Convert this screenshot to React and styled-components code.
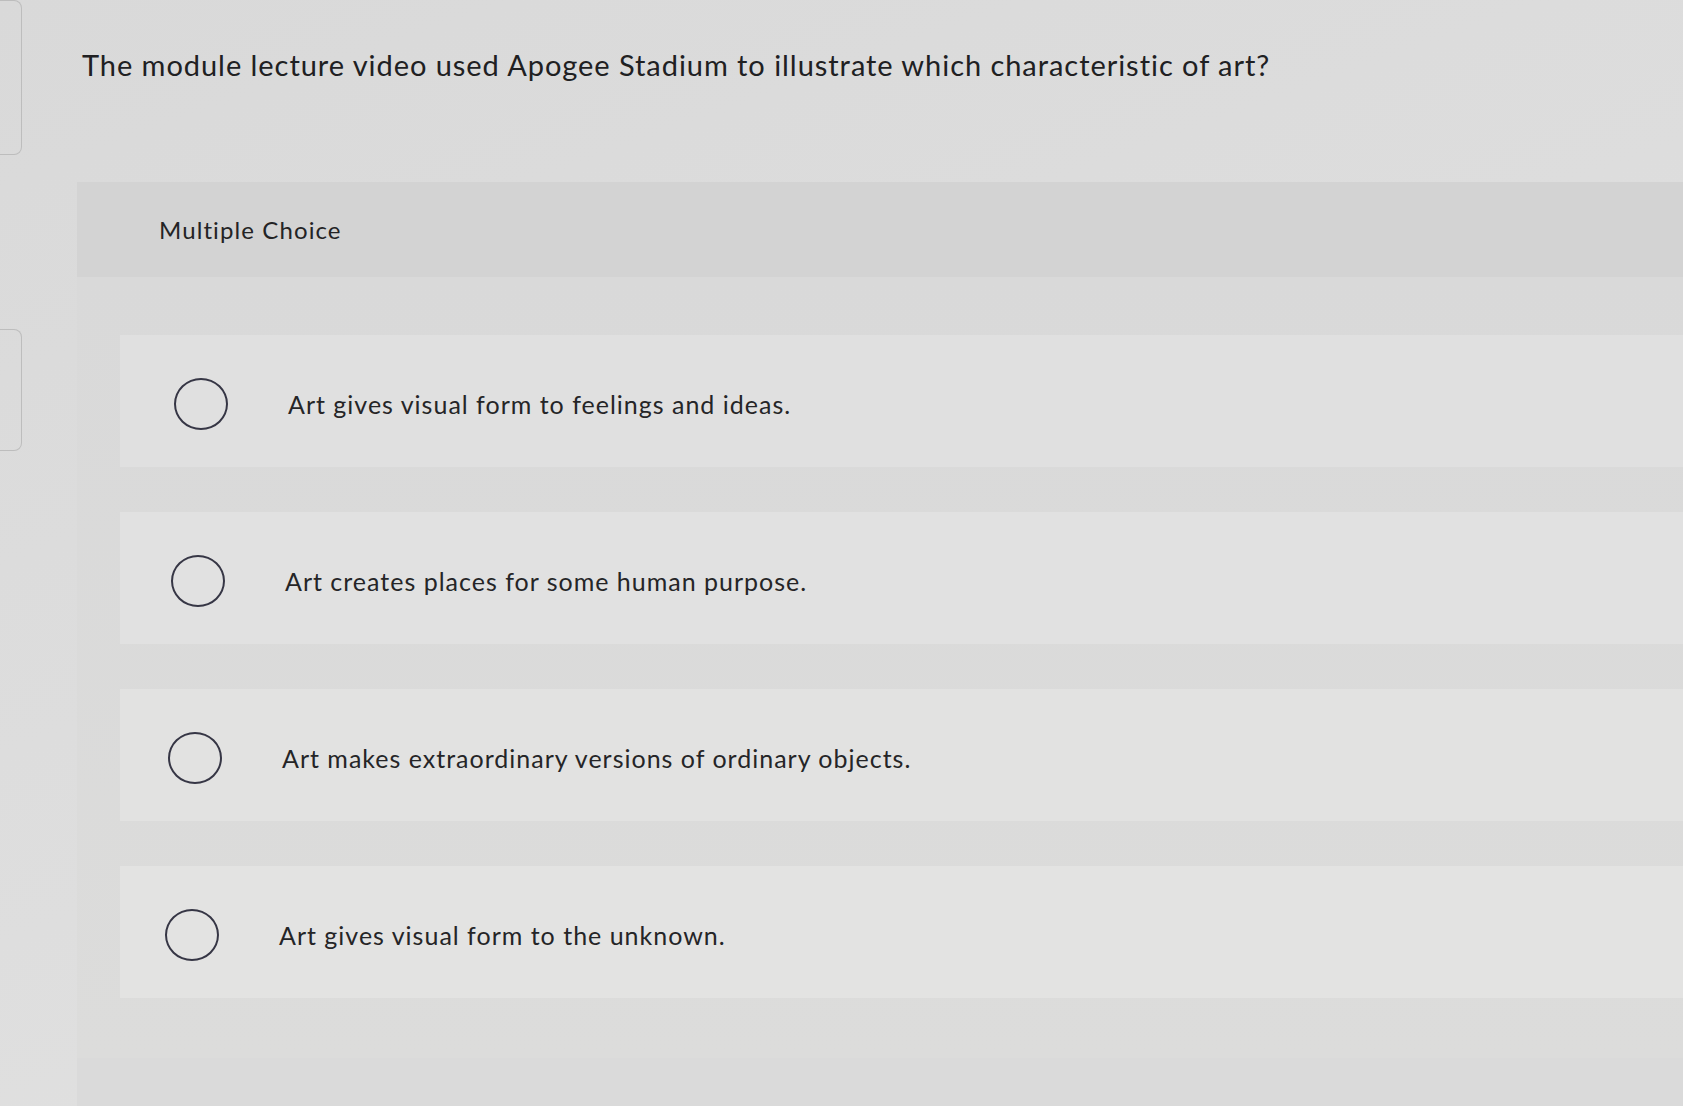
import React from 'react';
import styled, { createGlobalStyle } from 'styled-components';

const GlobalStyle = createGlobalStyle`
	html, body {
		margin: 0;
		padding: 0;
	}
	body {
		font-family: Lato, "Open Sans", "Liberation Sans", sans-serif;
		background: #dbdbdb;
	}
`;

const Page = styled.div`
	display: flex;
	min-height: 100vh;
	background: linear-gradient(160deg, #d9d9d9 0%, #dedede 55%, #e3e3e2 100%);
	overflow: hidden;
`;

const Rail = styled.div`
	width: 22px;
	flex-shrink: 0;
	display: flex;
	flex-direction: column;
`;

const RailTab = styled.div`
	height: ${props => props.h}px;
	margin-top: ${props => props.top || 0}px;
	border: 1.5px solid #bdbdbd;
	border-left: none;
	border-radius: 0 8px 8px 0;
`;

const Main = styled.main`
	flex: 1;
	padding-left: 55px;
	display: flex;
	flex-direction: column;
`;

const Question = styled.h1`
	margin: 47px 0 0 5px;
	font-size: 29px;
	font-weight: 400;
	line-height: 36px;
	color: #202022;
	letter-spacing: 0.95px;
	white-space: nowrap;
`;

const Panel = styled.section`
	margin-top: 99px;
	flex: 1;
	background: #dadada;
	display: flex;
	flex-direction: column;
`;

const PanelHeader = styled.div`
	height: 95px;
	display: flex;
	align-items: center;
	padding-left: 82px;
	background: #d3d3d3;
	font-size: 24px;
	letter-spacing: 1.1px;
	color: #232325;
`;

const OptionList = styled.div`
	display: flex;
	flex-direction: column;
	gap: 45px;
	padding: 58px 0 60px 43px;
	background: linear-gradient(180deg, #d9d9d9 0%, #dcdcdb 100%);
`;

const Option = styled.label`
	height: 132px;
	box-sizing: border-box;
	padding: 6px 0 0 ${props => props.indent}px;
	display: flex;
	align-items: center;
	background: ${props => props.shade};
	cursor: pointer;
`;

const Radio = styled.span`
	width: 50px;
	height: 48px;
	flex-shrink: 0;
	border: 2px solid #363645;
	border-radius: 50%;
`;

const OptionText = styled.span`
	margin-left: 60px;
	font-size: 25px;
	color: #252527;
	letter-spacing: 1px;
	white-space: nowrap;
`;

const options = [
	{ text: 'Art gives visual form to feelings and ideas.', indent: 54, shade: '#e0e0e0' },
	{ text: 'Art creates places for some human purpose.', indent: 51, shade: '#e1e1e1' },
	{ text: 'Art makes extraordinary versions of ordinary objects.', indent: 48, shade: '#e2e2e1' },
	{ text: 'Art gives visual form to the unknown.', indent: 45, shade: '#e3e3e2' }
];

export default function App() {
	return (
		<>
			<GlobalStyle />
			<Page>
				<Rail>
					<RailTab h={153} />
					<RailTab h={120} top={174} />
				</Rail>
				<Main>
					<Question>
						The module lecture video used Apogee Stadium to illustrate which characteristic of art?
					</Question>
					<Panel>
						<PanelHeader>Multiple Choice</PanelHeader>
						<OptionList>
							{options.map(o => (
								<Option key={o.text} indent={o.indent} shade={o.shade}>
									<Radio />
									<OptionText>{o.text}</OptionText>
								</Option>
							))}
						</OptionList>
					</Panel>
				</Main>
			</Page>
		</>
	);
}
